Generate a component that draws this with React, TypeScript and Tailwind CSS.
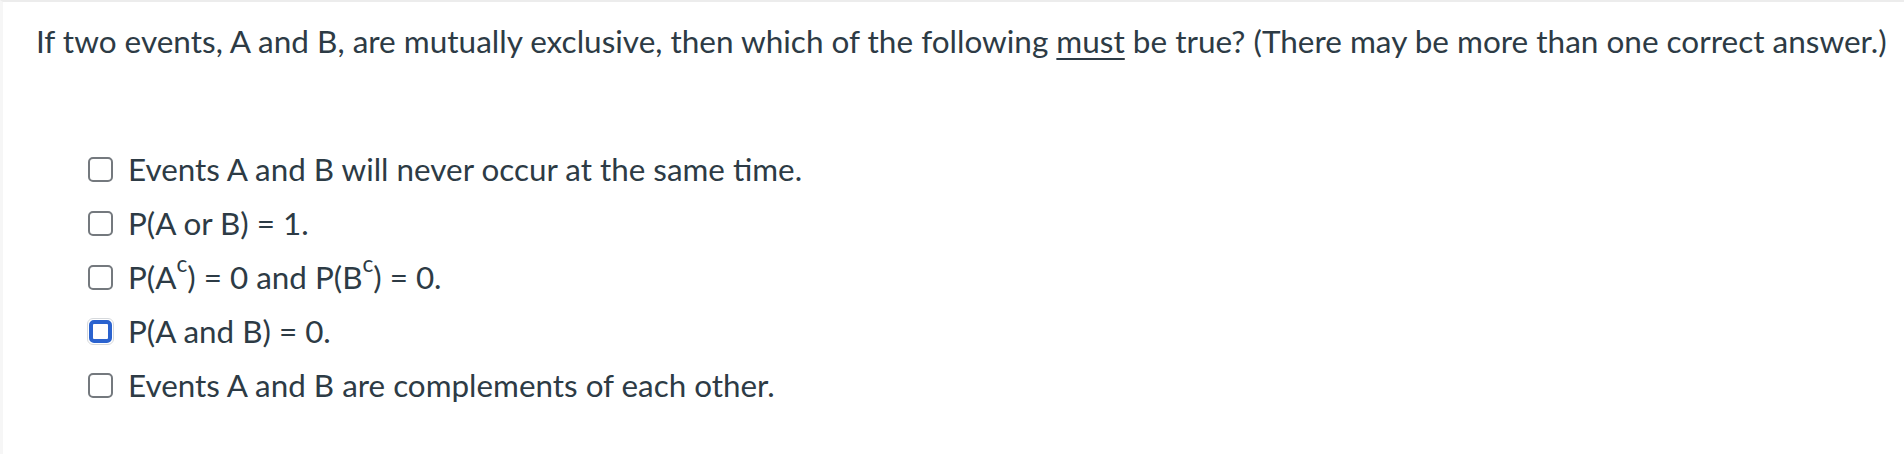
import React from "react";

type Option = { id: string; label: React.ReactNode; checked?: boolean };

const Sup = ({ children }: { children: React.ReactNode }) => (
  <sup className="relative -top-[0.75em] align-baseline text-[0.72em] leading-none">{children}</sup>
);

const options: Option[] = [
  { id: "a", label: "Events A and B will never occur at the same time." },
  { id: "b", label: "P(A or B) = 1." },
  {
    id: "c",
    label: (
      <>
        P(A<Sup>c</Sup>) = 0 and P(B<Sup>c</Sup>) = 0.
      </>
    ),
  },
  { id: "d", label: "P(A and B) = 0.", checked: true },
  { id: "e", label: "Events A and B are complements of each other." },
];

function Checkbox({ checked }: { checked?: boolean }) {
  if (checked) {
    return (
      <span className="flex h-[27px] w-[27px] shrink-0 items-center justify-center rounded-[6px] border border-[#d6d9dc]">
        <span className="h-[23px] w-[23px] rounded-[5px] border-[4px] border-[#2b63cf]" />
      </span>
    );
  }
  return (
    <span className="flex h-[27px] w-[27px] shrink-0 items-center justify-center">
      <span className="h-[25px] w-[25px] rounded-[5px] border-2 border-[#74797e]" />
    </span>
  );
}

export default function App() {
  return (
    <div
      className="min-h-[454px] w-full border-t-2 border-l-[3px] border-t-[#ececec] border-l-[#f6f6f6] bg-white text-[#2d3b45]"
      style={{ fontFamily: "Lato, 'Open Sans', sans-serif" }}
    >
      <div className="pl-[33px] pt-[17px] text-[31.5px] leading-[45px]">
        If two events, A and B, are mutually exclusive, then which of the following{" "}
        <span className="underline decoration-[2px] underline-offset-[5px]">must</span> be true? (There may be
        more than one correct answer.)
      </div>

      <div className="mt-[83px] flex flex-col gap-[9px] pl-[84px]">
        {options.map((o) => (
          <label key={o.id} className="flex h-[45px] items-center gap-[14px] text-[31.4px]">
            <Checkbox checked={o.checked} />
            <span>{o.label}</span>
          </label>
        ))}
      </div>
    </div>
  );
}
